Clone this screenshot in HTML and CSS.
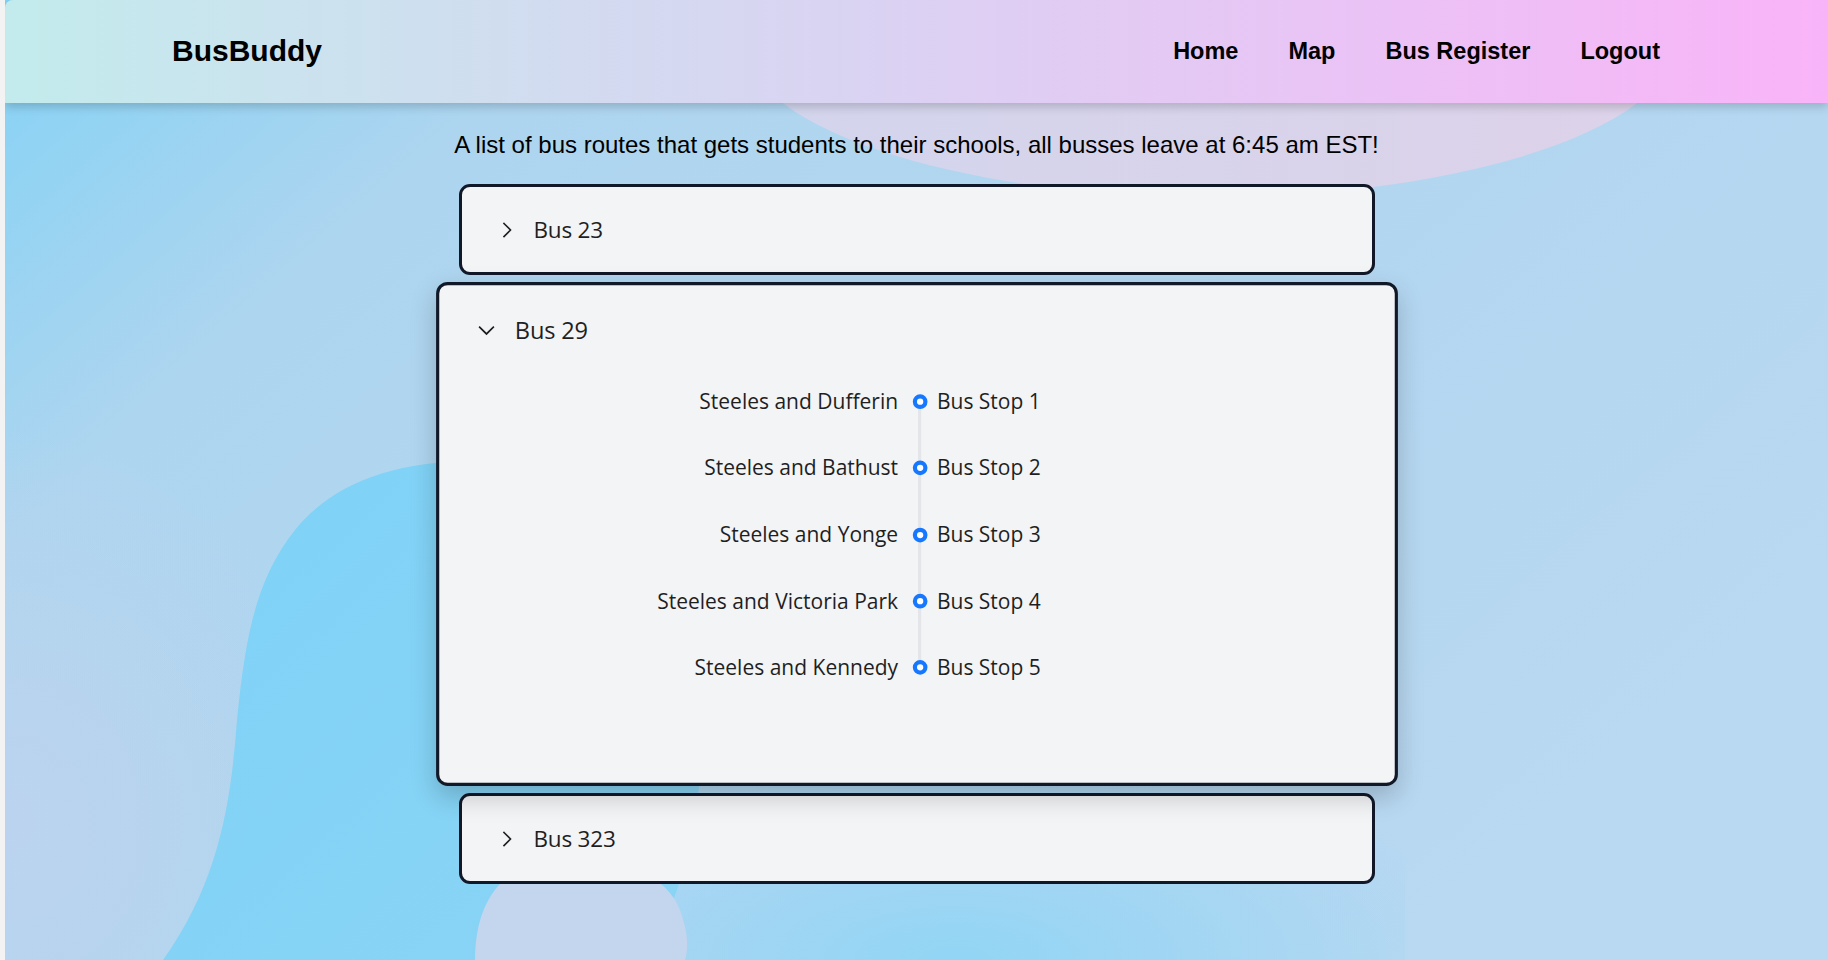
FILE: index.html
```html
<!DOCTYPE html>
<html lang="en">
<head>
<meta charset="utf-8">
<title>BusBuddy</title>
<link rel="stylesheet" href="styles.css">
</head>
<body>
<div class="app">
  <svg class="bg" viewBox="0 0 1823 960" preserveAspectRatio="none" aria-hidden="true">
    <defs>
      <linearGradient id="base" x1="0" y1="0" x2="1" y2="0.6">
        <stop offset="0" stop-color="#84d2f5"/>
        <stop offset="0.25" stop-color="#aed5ef"/>
        <stop offset="0.6" stop-color="#b2d6f0"/>
        <stop offset="1" stop-color="#b9d8f1"/>
      </linearGradient>
      <radialGradient id="bottomGlow" cx="0.5" cy="1" r="0.6">
        <stop offset="0" stop-color="#92d5f5"/>
        <stop offset="1" stop-color="#92d5f5" stop-opacity="0"/>
      </radialGradient>
      <linearGradient id="blobBlue" x1="0" y1="0" x2="1" y2="1">
        <stop offset="0" stop-color="#7dd2f7"/>
        <stop offset="1" stop-color="#8bd4f5"/>
      </linearGradient>
      <linearGradient id="blobLav" x1="0" y1="0" x2="1" y2="0">
        <stop offset="0" stop-color="#d2d5ed"/>
        <stop offset="1" stop-color="#ddd2e9"/>
      </linearGradient>
      <radialGradient id="leftPale" cx="0" cy="0.75" r="0.7">
        <stop offset="0" stop-color="#bcd3ee"/>
        <stop offset="1" stop-color="#bcd3ee" stop-opacity="0"/>
      </radialGradient>
    </defs>
    <rect x="0" y="0" width="1823" height="960" fill="url(#base)"/>
    <rect x="0" y="400" width="500" height="560" fill="url(#leftPale)"/>
    <rect x="500" y="600" width="900" height="360" fill="url(#bottomGlow)"/>
    <ellipse cx="1205" cy="36" rx="470" ry="161" fill="url(#blobLav)"/>
    <path d="M480 462 C400 458 330 480 290 530 C250 580 240 640 232 720 C226 800 215 880 158 960 L640 960 C700 860 720 700 660 560 C620 490 560 465 480 462 Z" fill="url(#blobBlue)"/>
    <path d="M540 860 C600 850 660 870 675 910 C684 935 683 950 680 960 L470 960 C470 910 490 870 540 860 Z" fill="#c4d5ee"/>
  </svg>

  <header class="topbar">
    <div class="logo">BusBuddy</div>
    <nav class="links">
      <a href="#">Home</a>
      <a href="#">Map</a>
      <a href="#">Bus Register</a>
      <a href="#">Logout</a>
    </nav>
  </header>

  <main class="content">
    <p class="intro">A list of bus routes that gets students to their schools, all busses leave at 6:45 am EST!</p>

    <div class="routes">
      <section class="route">
        <div class="route-head">
          <svg class="chev" viewBox="0 0 10 16" width="10" height="16"><path d="M2 1.5 L8.5 8 L2 14.5"/></svg>
          <span class="route-name">Bus 23</span>
        </div>
      </section>

      <section class="route open">
        <div class="route-head">
          <svg class="chev" viewBox="0 0 10 16" width="10" height="16"><path d="M2 1.5 L8.5 8 L2 14.5"/></svg>
          <span class="route-name">Bus 29</span>
        </div>
        <div class="route-body">
          <ol class="timeline">
            <li class="stop"><span class="stop-label">Steeles and Dufferin</span><span class="dot"></span><span class="stop-name">Bus Stop 1</span></li>
            <li class="stop"><span class="stop-label">Steeles and Bathust</span><span class="dot"></span><span class="stop-name">Bus Stop 2</span></li>
            <li class="stop"><span class="stop-label">Steeles and Yonge</span><span class="dot"></span><span class="stop-name">Bus Stop 3</span></li>
            <li class="stop"><span class="stop-label">Steeles and Victoria Park</span><span class="dot"></span><span class="stop-name">Bus Stop 4</span></li>
            <li class="stop"><span class="stop-label">Steeles and Kennedy</span><span class="dot"></span><span class="stop-name">Bus Stop 5</span></li>
          </ol>
        </div>
      </section>

      <section class="route">
        <div class="route-head">
          <svg class="chev" viewBox="0 0 10 16" width="10" height="16"><path d="M2 1.5 L8.5 8 L2 14.5"/></svg>
          <span class="route-name">Bus 323</span>
        </div>
      </section>
    </div>
  </main>
</div>
</body>
</html>
```

FILE: styles.css
```css
html, body {
  margin: 0;
  padding: 0;
  height: 100%;
}

body {
  background: #f3f3f3;
  overflow: hidden;
}

.app {
  margin-left: 5px;
  height: 960px;
  position: relative;
  overflow: hidden;
  background: #b0d6f0;
}

.bg {
  position: absolute;
  top: 0;
  left: 0;
  width: 100%;
  height: 100%;
  z-index: 0;
}

.topbar {
  position: relative;
  z-index: 3;
  height: 103px;
  box-sizing: border-box;
  display: flex;
  align-items: center;
  justify-content: space-between;
  padding: 0 168px 2px 167px;
  background: linear-gradient(90deg, #c3ebec 0%, #d9d4f2 45%, #f9b4f8 100%);
  box-shadow: 0 4px 10px rgba(0, 0, 0, 0.18);
  border-top-left-radius: 8px;
  font-family: "Liberation Sans", Arial, sans-serif;
}

.logo {
  font-size: 30px;
  font-weight: 700;
  color: #000;
}

.links {
  display: flex;
  gap: 50px;
  padding-top: 2px;
}

.links a {
  font-size: 23.5px;
  font-weight: 700;
  color: #000;
  text-decoration: none;
}

.content {
  position: relative;
  z-index: 1;
  display: flex;
  flex-direction: column;
  align-items: center;
  padding-top: 28px;
}

.intro {
  margin: 0;
  font-family: "Liberation Sans", Arial, sans-serif;
  font-size: 24px;
  color: #000;
}

.routes {
  margin-top: 25px;
  width: 916px;
  display: flex;
  flex-direction: column;
  gap: 19px;
}

.route {
  background: #f3f4f6;
  border: 3px solid #111827;
  border-radius: 11px;
  font-family: "Open Sans", "Noto Sans", sans-serif;
  color: #1f1f1f;
}

.route.open {
  transform: scale(1.05);
  box-shadow: 0 10px 25px rgba(0, 0, 0, 0.2);
}

.route-head {
  height: 85px;
  display: flex;
  align-items: center;
  padding-left: 40px;
  gap: 22px;
}

.chev {
  flex: none;
}

.chev path {
  fill: none;
  stroke: #1f1f1f;
  stroke-width: 1.6;
  stroke-linecap: square;
}

.route.open .chev {
  transform: rotate(90deg);
}

.route-name {
  font-size: 22.5px;
  letter-spacing: -0.2px;
}

.route-body {
  padding: 10px 0 63px;
}

.timeline {
  list-style: none;
  margin: 0;
  padding: 0;
  background-image: linear-gradient(#e4e5e8, #e4e5e8);
  background-repeat: no-repeat;
  background-size: 3px 253px;
  background-position: calc(50% + 2.5px) 16px;
}

.stop {
  height: 63.3px;
  display: grid;
  grid-template-columns: 1fr 36px 1fr;
  align-items: start;
  line-height: 32px;
  font-size: 20px;
}

.stop-label {
  text-align: right;
}

.dot {
  justify-self: center;
  margin-top: 9px;
  margin-left: 5px;
  width: 14px;
  height: 14px;
  box-sizing: border-box;
  border: 4px solid #1677ff;
  border-radius: 50%;
  background: #fff;
}

.stop-name {
  padding-left: 1px;
}
```
